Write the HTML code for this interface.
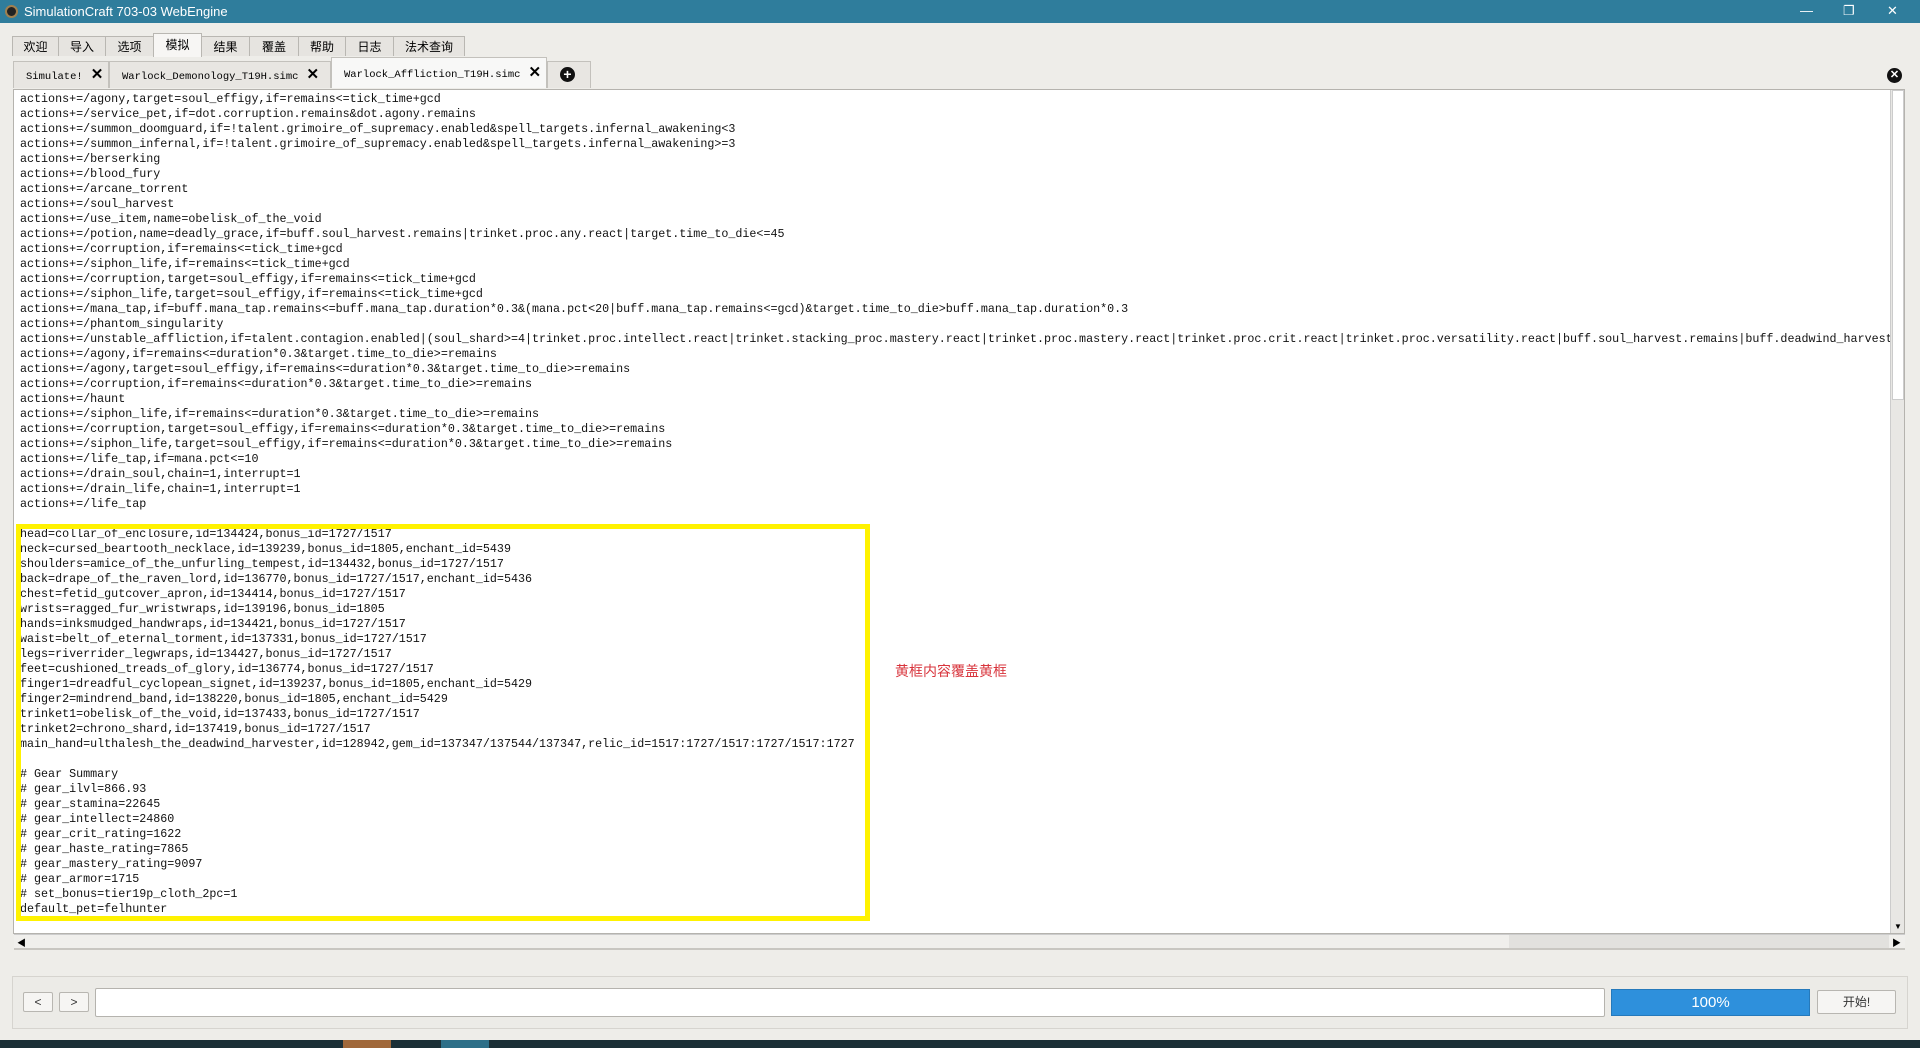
<!DOCTYPE html>
<html><head><meta charset="utf-8">
<style>
*{margin:0;padding:0;box-sizing:border-box}
body{width:1920px;height:1048px;overflow:hidden;background:#eeede9;font-family:"Liberation Sans","Noto Sans CJK SC",sans-serif;position:relative}
.title{position:absolute;left:0;top:0;width:1920px;height:23px;background:#2f7d9c;color:#fff;font-size:13px;line-height:23px;padding-left:24px}
.title .ic{position:absolute;left:5px;top:5px;width:13px;height:13px;border-radius:50%;background:#222;border:2px solid #a08050}
.wc{position:absolute;top:0;color:#fff;font-size:13px;line-height:22px}
.mt{position:absolute;top:36px;height:20px;border:1px solid #b9b7b2;border-bottom:none;background:#e6e4e0;font-size:12px;line-height:19px;text-align:center;font-family:"Noto Sans CJK SC",sans-serif}
.mt.a{top:33px;height:24px;background:#f7f6f4;line-height:21px}
.ft{position:absolute;top:61px;height:27px;border:1px solid #c3c1bc;border-bottom:none;background:#e8e6e2;font-family:"Liberation Mono",monospace;font-size:10.5px;line-height:26px;padding-left:12px}
.ft.a{top:57px;height:31px;background:#f8f8f7;line-height:29px}
.ft b{font-family:"Liberation Sans",sans-serif;font-size:15px;margin-left:8px}
.ta{position:absolute;left:13px;top:89px;width:1892px;height:845px;background:#fff;border:1px solid #b5b3ae;overflow:hidden}
pre{position:absolute;left:6px;top:2px;font-family:"Liberation Mono",monospace;font-size:11.7px;line-height:15px;color:#111;white-space:pre}
.yb{position:absolute;left:16px;top:524px;width:854px;height:397px;border:5px solid #fff200}
.red{position:absolute;left:895px;top:661px;color:#d8343c;font-size:14px;font-family:"Noto Sans CJK SC",sans-serif}
.vs{position:absolute;left:1890px;top:90px;width:14px;height:843px;background:#e8e7e4;border-left:1px solid #ccc}
.hs{position:absolute;left:14px;top:934px;width:1891px;height:16px;background:#f0efec;border-top:1px solid #ccc;border-bottom:2px solid #c8c6c1}
.panel{position:absolute;left:12px;top:976px;width:1896px;height:53px;border:1px solid #d6d4cf;background:#ecebe7}
.btn{position:absolute;border:1px solid #b8b6b1;background:#f6f5f3;border-radius:2px;font-size:12px;text-align:center;color:#333}
.taskbar{position:absolute;left:0;top:1040px;width:1920px;height:8px;background:#1b2f36}
</style></head><body>
<div class="title"><span class="ic"></span>SimulationCraft 703-03 WebEngine</div>
<div class="wc" style="left:1800px">—</div><div class="wc" style="left:1843px">❐</div><div class="wc" style="left:1887px">✕</div>

<div class="mt" style="left:12px;width:47px">欢迎</div>
<div class="mt" style="left:58px;width:48px">导入</div>
<div class="mt" style="left:105px;width:49px">选项</div>
<div class="mt a" style="left:153px;width:49px">模拟</div>
<div class="mt" style="left:201px;width:49px">结果</div>
<div class="mt" style="left:249px;width:50px">覆盖</div>
<div class="mt" style="left:298px;width:48px">帮助</div>
<div class="mt" style="left:345px;width:49px">日志</div>
<div class="mt" style="left:393px;width:72px">法术查询</div>

<div class="ft" style="left:13px;width:96px">Simulate!<b>✕</b></div>
<div class="ft" style="left:109px;width:222px">Warlock_Demonology_T19H.simc<b>✕</b></div>
<div class="ft a" style="left:331px;width:216px">Warlock_Affliction_T19H.simc<b>✕</b></div>
<div class="ft" style="left:547px;width:44px;padding-left:12px"><span style="display:inline-block;width:15px;height:15px;border-radius:50%;background:#111;color:#fff;font:bold 14px/15px 'Liberation Sans';text-align:center;vertical-align:middle">+</span></div>
<div style="position:absolute;left:1887px;top:68px;width:15px;height:15px;border-radius:50%;background:#111;color:#fff;font:bold 11px/15px 'Liberation Sans';text-align:center">✕</div>

<div class="ta"><pre>actions+=/agony,target=soul_effigy,if=remains&lt;=tick_time+gcd
actions+=/service_pet,if=dot.corruption.remains&amp;dot.agony.remains
actions+=/summon_doomguard,if=!talent.grimoire_of_supremacy.enabled&amp;spell_targets.infernal_awakening&lt;3
actions+=/summon_infernal,if=!talent.grimoire_of_supremacy.enabled&amp;spell_targets.infernal_awakening&gt;=3
actions+=/berserking
actions+=/blood_fury
actions+=/arcane_torrent
actions+=/soul_harvest
actions+=/use_item,name=obelisk_of_the_void
actions+=/potion,name=deadly_grace,if=buff.soul_harvest.remains|trinket.proc.any.react|target.time_to_die&lt;=45
actions+=/corruption,if=remains&lt;=tick_time+gcd
actions+=/siphon_life,if=remains&lt;=tick_time+gcd
actions+=/corruption,target=soul_effigy,if=remains&lt;=tick_time+gcd
actions+=/siphon_life,target=soul_effigy,if=remains&lt;=tick_time+gcd
actions+=/mana_tap,if=buff.mana_tap.remains&lt;=buff.mana_tap.duration*0.3&amp;(mana.pct&lt;20|buff.mana_tap.remains&lt;=gcd)&amp;target.time_to_die&gt;buff.mana_tap.duration*0.3
actions+=/phantom_singularity
actions+=/unstable_affliction,if=talent.contagion.enabled|(soul_shard&gt;=4|trinket.proc.intellect.react|trinket.stacking_proc.mastery.react|trinket.proc.mastery.react|trinket.proc.crit.react|trinket.proc.versatility.react|buff.soul_harvest.remains|buff.deadwind_harvest
actions+=/agony,if=remains&lt;=duration*0.3&amp;target.time_to_die&gt;=remains
actions+=/agony,target=soul_effigy,if=remains&lt;=duration*0.3&amp;target.time_to_die&gt;=remains
actions+=/corruption,if=remains&lt;=duration*0.3&amp;target.time_to_die&gt;=remains
actions+=/haunt
actions+=/siphon_life,if=remains&lt;=duration*0.3&amp;target.time_to_die&gt;=remains
actions+=/corruption,target=soul_effigy,if=remains&lt;=duration*0.3&amp;target.time_to_die&gt;=remains
actions+=/siphon_life,target=soul_effigy,if=remains&lt;=duration*0.3&amp;target.time_to_die&gt;=remains
actions+=/life_tap,if=mana.pct&lt;=10
actions+=/drain_soul,chain=1,interrupt=1
actions+=/drain_life,chain=1,interrupt=1
actions+=/life_tap

head=collar_of_enclosure,id=134424,bonus_id=1727/1517
neck=cursed_beartooth_necklace,id=139239,bonus_id=1805,enchant_id=5439
shoulders=amice_of_the_unfurling_tempest,id=134432,bonus_id=1727/1517
back=drape_of_the_raven_lord,id=136770,bonus_id=1727/1517,enchant_id=5436
chest=fetid_gutcover_apron,id=134414,bonus_id=1727/1517
wrists=ragged_fur_wristwraps,id=139196,bonus_id=1805
hands=inksmudged_handwraps,id=134421,bonus_id=1727/1517
waist=belt_of_eternal_torment,id=137331,bonus_id=1727/1517
legs=riverrider_legwraps,id=134427,bonus_id=1727/1517
feet=cushioned_treads_of_glory,id=136774,bonus_id=1727/1517
finger1=dreadful_cyclopean_signet,id=139237,bonus_id=1805,enchant_id=5429
finger2=mindrend_band,id=138220,bonus_id=1805,enchant_id=5429
trinket1=obelisk_of_the_void,id=137433,bonus_id=1727/1517
trinket2=chrono_shard,id=137419,bonus_id=1727/1517
main_hand=ulthalesh_the_deadwind_harvester,id=128942,gem_id=137347/137544/137347,relic_id=1517:1727/1517:1727/1517:1727

# Gear Summary
# gear_ilvl=866.93
# gear_stamina=22645
# gear_intellect=24860
# gear_crit_rating=1622
# gear_haste_rating=7865
# gear_mastery_rating=9097
# gear_armor=1715
# set_bonus=tier19p_cloth_2pc=1
default_pet=felhunter</pre></div>
<div class="vs"><div style="position:absolute;left:1px;top:0;width:12px;height:310px;background:#fff;border:1px solid #ccc"></div><div style="position:absolute;bottom:2px;left:3px;font-size:8px">▼</div></div>
<div class="hs"><div style="position:absolute;left:1495px;top:0;width:380px;height:13px;background:#e2e1de"></div><div style="position:absolute;left:3px;top:1px;font-size:9px">◀</div><div style="position:absolute;right:4px;top:1px;font-size:9px">▶</div></div>
<div class="yb"></div>
<div class="red">黄框内容覆盖黄框</div>

<div class="panel"></div>
<div class="btn" style="left:23px;top:992px;width:30px;height:20px;line-height:18px">&lt;</div>
<div class="btn" style="left:59px;top:992px;width:30px;height:20px;line-height:18px">&gt;</div>
<div style="position:absolute;left:95px;top:988px;width:1510px;height:29px;background:#fff;border:1px solid #b5b3ae;border-radius:2px"></div>
<div style="position:absolute;left:1611px;top:989px;width:199px;height:27px;background:#2e90dc;border:1px solid #2579bb;color:#fff;font-size:15px;line-height:25px;text-align:center">100%</div>
<div class="btn" style="left:1817px;top:990px;width:79px;height:24px;line-height:22px;font-family:'Liberation Sans','Noto Sans CJK SC',sans-serif">开始!</div>
<div class="taskbar"><div style="position:absolute;left:343px;width:48px;height:8px;background:#a0683a"></div><div style="position:absolute;left:441px;width:48px;height:8px;background:#2d6f88"></div></div>
</body></html>
